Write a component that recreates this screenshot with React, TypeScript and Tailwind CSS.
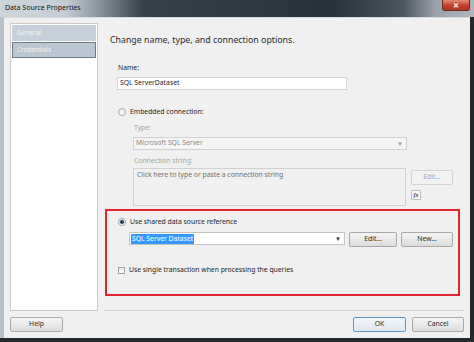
import React from "react";

function Button({ label, className = "", primary = false, disabled = false }: { label: string; className?: string; primary?: boolean; disabled?: boolean }) {
  const tone = disabled
    ? "border-[#d2d2d2] bg-[#f2f2f2] text-[#a6a6a6]"
    : primary
    ? "border-[#5a9ac8] bg-gradient-to-b from-[#f4f8fb] to-[#dde6ee] text-[#2a2a2a]"
    : "border-[#a9a9a9] bg-gradient-to-b from-[#f5f5f5] to-[#dcdcdc] text-[#2a2a2a]";
  return (
    <div className={`flex items-center justify-center rounded-[2px] border text-[6.8px] leading-none ${tone} ${className}`}>
      {label}
    </div>
  );
}

function Radio({ checked = false }: { checked?: boolean }) {
  return (
    <span className="flex h-[8px] w-[8px] items-center justify-center rounded-full border border-[#9aa3ab] bg-gradient-to-b from-[#e6e9ec] to-[#ffffff]">
      {checked && <span className="h-[4px] w-[4px] rounded-full bg-[#1f3a55]" />}
    </span>
  );
}

function Arrow({ color = "text-[#333]" }: { color?: string }) {
  return <span className={`ml-auto mr-[3px] text-[6px] leading-none ${color}`}>▼</span>;
}

export default function App() {
  return (
    <div className="flex h-[342px] w-[474px] flex-col overflow-hidden bg-[#262c32] font-['Noto_Sans',sans-serif]">
      {/* title bar */}
      <div className="flex h-[17px] items-start bg-[linear-gradient(90deg,#cdd5dc_0%,#c4cdd5_14%,#7f8a94_22%,#36414b_30%,#27313a_70%,#4c5660_85%,#9ba3aa_92%,#aeb5bb_100%)]">
        <span className="pl-[5px] pt-[3px] text-[7px] leading-[9px] text-[#141414]">Data Source Properties</span>
        <div className="ml-auto mr-[4px] flex h-[11px] w-[28px] items-center justify-center rounded-b-[3px] border border-t-0 border-[#6b2a22] bg-gradient-to-b from-[#e08a78] via-[#c7432f] to-[#b13522] text-[7px] font-bold leading-none text-white">
          ✕
        </div>
      </div>

      <div className="flex flex-1">
        <div className="w-[4px] bg-[#b7c1ca]" />
        {/* dialog body */}
        <div className="flex flex-1 flex-col border-t border-[#d6dbe0] bg-[#f0f0f0] pl-[6px] pr-[6px] pt-[5px]">
          <div className="flex h-[288px]">
            {/* page list */}
            <div className="flex w-[88px] flex-col gap-[1px] border border-[#cbcbcb] bg-white p-[1px]">
              <div className="flex h-[16px] items-center bg-[#c5d0da] pl-[5px] text-[6.5px] text-[#f2f5f8]">General</div>
              <div className="flex h-[16px] items-center border border-[#6e7b86] bg-[#bac7d2] pl-[4px] text-[6.5px] text-[#eef2f6]">Credentials</div>
            </div>

            {/* right pane */}
            <div className="ml-[6px] flex flex-1 flex-col border-b border-[#d3d3d3]">
              <div className="ml-[6px] mt-[11px] h-[12px] text-[8.8px] leading-[12px] text-[#2b2b2b]">
                Change name, type, and connection options.
              </div>

              <div className="ml-[13px] flex flex-col">
                <div className="mt-[17px] h-[10px] pl-[1px] text-[6.8px] leading-[10px] text-[#222]">Name:</div>
                <div className="mt-[4px] flex h-[13px] w-[230px] items-center border border-[#d4d4d4] bg-white pl-[2px] text-[6.8px] text-[#222]">
                  SQL ServerDataset
                </div>

                <div className="mt-[17px] flex h-[10px] items-center gap-[4px] pl-[1px]">
                  <Radio />
                  <span className="text-[6.8px] leading-[10px] text-[#222]">Embedded connection:</span>
                </div>

                <div className="ml-[16px] flex flex-col">
                  <div className="mt-[6px] h-[10px] pl-[1px] text-[6.8px] leading-[10px] text-[#a3a3a3]">Type:</div>
                  <div className="mt-[4px] flex h-[13px] w-[274px] items-center border border-[#d0d0d0] bg-[#f4f4f4] pl-[2px] text-[6.8px] text-[#8a8a8a]">
                    Microsoft SQL Server
                    <Arrow color="text-[#9a9a9a]" />
                  </div>
                  <div className="mt-[6px] h-[10px] pl-[1px] text-[6.8px] leading-[10px] text-[#a3a3a3]">Connection string:</div>
                  <div className="mt-[2px] flex">
                    <div className="h-[38px] w-[273px] border border-[#d0d0d0] bg-[#f0f0f0] pl-[3px] pt-[1px] text-[6.8px] leading-[10px] text-[#6e6e6e]">
                      Click here to type or paste a connection string
                    </div>
                    <div className="ml-[5px] flex flex-col">
                      <Button label="Edit..." disabled className="mt-[2px] h-[15px] w-[42px]" />
                      <div className="mt-[5px] flex h-[10px] w-[10px] items-center justify-center rounded-[1px] border border-[#bdbdbd] bg-[#f7f7f7] font-['Liberation_Serif',serif] text-[6px] font-bold italic leading-none text-[#333]">
                        fx
                      </div>
                    </div>
                  </div>
                </div>
              </div>

              {/* highlighted box */}
              <div className="ml-[1px] mt-[3px] flex h-[87px] w-[355px] flex-col border-2 border-[#e0262c] pl-[11px]">
                <div className="mt-[6px] flex h-[10px] items-center gap-[4px]">
                  <Radio checked />
                  <span className="text-[6.8px] leading-[10px] text-[#222]">Use shared data source reference</span>
                </div>
                <div className="mt-[5px] flex h-[15px] items-start">
                  <div className="ml-[11px] flex h-[13px] w-[216px] items-center border border-[#c4c4c4] bg-white pl-[1px]">
                    <span className="bg-[#3399ff] px-[1px] text-[6.8px] leading-[10px] text-white">SQL Server Dataset</span>
                    <Arrow />
                  </div>
                  <Button label="Edit..." className="ml-[4px] h-[15px] w-[48px]" />
                  <Button label="New..." className="ml-[4px] h-[15px] w-[52px]" />
                </div>
                <div className="mt-[18px] flex h-[10px] items-center gap-[4px]">
                  <span className="h-[7px] w-[7px] border border-[#9ca3aa] bg-gradient-to-b from-[#e8eaec] to-white" />
                  <span className="text-[6.8px] leading-[10px] text-[#222]">Use single transaction when processing the queries</span>
                </div>
              </div>
            </div>
          </div>

          {/* bottom buttons */}
          <div className="mt-[6px] flex h-[15px]">
            <Button label="Help" className="h-[15px] w-[53px]" />
            <Button label="OK" primary className="ml-auto h-[15px] w-[53px]" />
            <Button label="Cancel" className="ml-[6px] h-[15px] w-[52px]" />
          </div>
        </div>
        <div className="w-[4px] bg-[#20272d]" />
      </div>
      <div className="h-[4px] bg-[#24292e]" />
    </div>
  );
}
